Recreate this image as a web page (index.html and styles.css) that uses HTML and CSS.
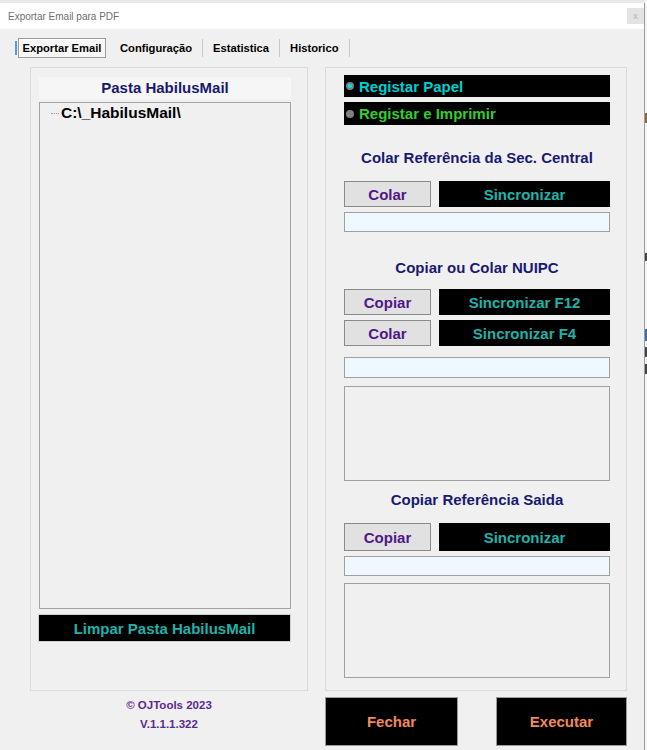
FILE: index.html
```html
<!DOCTYPE html>
<html lang="pt">
<head>
    <meta charset="UTF-8">
    <title>Exportar Email para PDF</title>
    <link rel="stylesheet" href="styles.css">
</head>
<body>
    <div class="screen">
      <div class="window">
        <div class="titlebar">
          <span class="title">Exportar Email para PDF</span>
          <span class="close">x</span>
        </div>

        <nav class="tabs">
          <span class="focus-mark"></span>
          <span class="tab tab--active">Exportar Email</span>
          <span class="tab">Configuração</span>
          <span class="tab">Estatistica</span>
          <span class="tab">Historico</span>
        </nav>

        <div class="columns">
          <div class="col-left">
            <section class="panel panel--left">
              <div class="folder-title">Pasta HabilusMail</div>
              <div class="tree">
                <div class="tree-item"><span class="tree-line"></span>C:\_HabilusMail\</div>
              </div>
              <button class="btn-dark btn-clear">Limpar Pasta HabilusMail</button>
            </section>
            <footer class="credits">
              <p>© OJTools 2023</p>
              <p>V.1.1.1.322</p>
            </footer>
          </div>

          <div class="col-right">
            <section class="panel panel--right">
              <div class="radio radio--paper"><span class="radio-dot radio-dot--on"></span>Registar Papel</div>
              <div class="radio radio--print"><span class="radio-dot"></span>Registar e Imprimir</div>

              <h2 class="group-title group-title--first">Colar Referência da Sec. Central</h2>
              <div class="btn-row">
                <button class="btn-light">Colar</button>
                <button class="btn-dark">Sincronizar</button>
              </div>
              <div class="field"></div>

              <h2 class="group-title group-title--second">Copiar ou Colar NUIPC</h2>
              <div class="btn-row">
                <button class="btn-light">Copiar</button>
                <button class="btn-dark">Sincronizar F12</button>
              </div>
              <div class="btn-row">
                <button class="btn-light">Colar</button>
                <button class="btn-dark">Sincronizar F4</button>
              </div>
              <div class="field field--spaced"></div>
              <div class="memo"></div>

              <h2 class="group-title group-title--third">Copiar Referência Saida</h2>
              <div class="btn-row btn-row--tall">
                <button class="btn-light">Copiar</button>
                <button class="btn-dark">Sincronizar</button>
              </div>
              <div class="field"></div>
              <div class="memo memo--last"></div>
            </section>
            <div class="actions">
              <button class="btn-action btn-close">Fechar</button>
              <button class="btn-action btn-run">Executar</button>
            </div>
          </div>
        </div>
      </div>

      <!-- sliver of the window behind -->
      <div class="behind">
        <span class="frag frag--1"></span>
        <span class="frag frag--2"></span>
        <span class="frag frag--3"></span>
        <span class="frag frag--4"></span>
        <span class="frag frag--5"></span>
      </div>
    </div>
</body>
</html>
```

FILE: styles.css
```css
* {
  box-sizing: border-box;
  margin: 0;
  padding: 0;
}

body {
  background: #e8e8e8;
  font-family: "Liberation Sans", Arial, sans-serif;
  overflow: hidden;
}

button {
  font-family: inherit;
  font-weight: bold;
  cursor: default;
}

.screen {
  display: flex;
  height: 750px;
}

.window {
  width: 645px;
  flex: 0 0 645px;
  margin-top: 3px;
  background: #f0f0f0;
  border-right: 1px solid #9c9c9c;
  display: flex;
  flex-direction: column;
}

.titlebar {
  height: 26px;
  background: #fff;
  display: flex;
  align-items: center;
  justify-content: space-between;
  padding-left: 8px;
}

.title {
  font-size: 10px;
  color: #6e6e6e;
}

.close {
  width: 17px;
  height: 16px;
  background: #e3e3e3;
  color: #b4b4b4;
  font-size: 9px;
  display: flex;
  align-items: center;
  justify-content: center;
}

/* tabs */
.tabs {
  display: flex;
  align-items: center;
  height: 20px;
  margin: 9px 0 9px 15px;
  font-size: 11.2px;
  font-weight: bold;
  color: #000;
}

.focus-mark {
  width: 2px;
  height: 14px;
  background: #5b9bd5;
  margin-right: 1px;
}

.tab {
  padding: 0 10px;
  line-height: 18px;
  border-right: 1px solid #c9c9c9;
}

.tab--active {
  padding: 1px 3.5px;
  line-height: 16px;
  margin-right: 4px;
  background: #f7f7f7;
  border: 1px solid #9a9a9a;
  box-shadow: inset 1px 1px 0 #fff;
}

/* columns */
.columns {
  display: flex;
  gap: 17px;
  padding-left: 30px;
}

.col-left {
  width: 278px;
  display: flex;
  flex-direction: column;
}

.col-right {
  width: 302px;
  display: flex;
  flex-direction: column;
}

.panel {
  height: 624px;
  border: 1px solid #dadada;
}

.panel--left {
  padding: 9px 16px 0 8px;
}

.panel--right {
  padding: 7px 16px 0 18px;
}

.folder-title {
  height: 22px;
  line-height: 22px;
  background: #f6f6f6;
  text-align: center;
  color: #191970;
  font-size: 15px;
  font-weight: bold;
}

.tree {
  margin-top: 3px;
  height: 507px;
  border: 1px solid #a3a3a3;
  padding-top: 1px;
}

.tree-item {
  display: flex;
  align-items: center;
  line-height: 18px;
  font-size: 15.5px;
  font-weight: bold;
  color: #000;
}

.tree-line {
  width: 8px;
  margin: 0 2px 0 11px;
  border-top: 1px dotted #9a9a9a;
}

.btn-dark {
  background: #000;
  color: #20b2aa;
  font-size: 15px;
  border: none;
}

.btn-clear {
  display: block;
  width: 253px;
  height: 28px;
  margin: 5px 0 0 -1px;
  border: 1px solid #d0d0d0;
}

.credits {
  padding-top: 5px;
  text-align: center;
  font-size: 11.5px;
  font-weight: bold;
  line-height: 19px;
  color: #5b2a91;
}

/* right panel */
.radio {
  display: flex;
  align-items: center;
  height: 22px;
  padding-left: 2px;
  background: #000;
  font-size: 15px;
  font-weight: bold;
}

.radio--paper {
  color: #00ced1;
}

.radio--print {
  height: 23px;
  margin-top: 5px;
  color: #32cd32;
}

.radio-dot {
  width: 8px;
  height: 8px;
  margin-right: 5px;
  border-radius: 50%;
  background: #808080;
  display: flex;
  align-items: center;
  justify-content: center;
}

.radio-dot--on::after {
  content: "";
  width: 4px;
  height: 4px;
  border-radius: 50%;
  background: #00e5ee;
}

.group-title {
  height: 20px;
  line-height: 20px;
  text-align: center;
  color: #191970;
  font-size: 15px;
  font-weight: bold;
}

.group-title--first {
  margin: 23px 0 13px;
}

.group-title--second {
  margin: 26px 0 11px;
}

.group-title--third {
  margin: 9px 0 13px;
}

.btn-row {
  display: flex;
  gap: 8px;
  height: 26px;
}

.btn-row + .btn-row {
  margin-top: 5px;
}

.btn-row--tall {
  height: 28px;
}

.btn-light {
  width: 87px;
  background: #e1e1e1;
  border: 1px solid #8a8a8a;
  color: #4f1787;
  font-size: 15px;
}

.btn-row .btn-dark {
  flex: 1;
}

.field {
  height: 20px;
  margin-top: 5px;
  background: #f0f8ff;
  border: 1px solid #a0a0a0;
}

.field--spaced {
  height: 21px;
  margin-top: 11px;
}

.memo {
  height: 95px;
  margin-top: 8px;
  border: 1px solid #a0a0a0;
}

.memo--last {
  margin-top: 7px;
}

.actions {
  display: flex;
  justify-content: space-between;
  margin-top: 6px;
}

.btn-action {
  height: 49px;
  background: #000;
  border: 1px solid #9a9a9a;
  color: #f4895f;
  font-size: 15px;
}

.btn-close {
  width: 133px;
}

.btn-run {
  width: 131px;
}

/* window behind, only a sliver shows */
.behind {
  flex: 1;
  overflow: hidden;
  background: #f4f4f4;
  display: flex;
  flex-direction: column;
}

.frag {
  display: block;
  width: 2px;
  height: 10px;
  background: #444;
}

.frag--1 { margin-top: 113px; background: #8a6a3a; }
.frag--2 { margin-top: 130px; height: 8px; }
.frag--3 { margin-top: 68px; background: #3d6fb5; height: 12px; }
.frag--4 { margin-top: 6px; }
.frag--5 { margin-top: 7px; }
```
